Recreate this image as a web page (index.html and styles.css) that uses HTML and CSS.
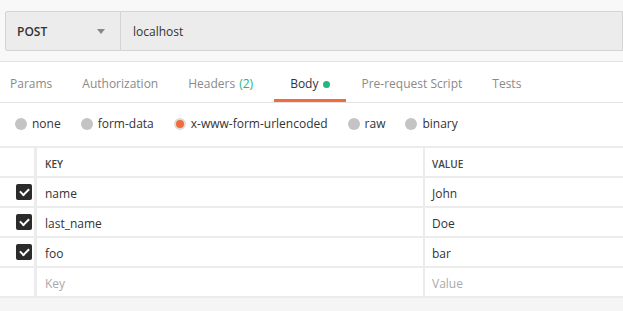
FILE: index.html
```html
<!DOCTYPE html>
<html lang="en">
<head>
    <meta charset="UTF-8">
    <title>Request - Body</title>
    <link rel="stylesheet" href="styles.css">
</head>
<body>
    <div class="request-bar">
        <div class="method">
            <span>POST</span>
            <span class="caret"></span>
        </div>
        <div class="url">localhost</div>
    </div>

    <div class="tabs">
        <div class="tab">Params</div>
        <div class="tab">Authorization</div>
        <div class="tab">Headers <span class="count">(2)</span></div>
        <div class="tab active">Body <span class="dot"></span></div>
        <div class="tab">Pre-request Script</div>
        <div class="tab">Tests</div>
    </div>

    <div class="body-types">
        <label class="radio"><span class="circle"></span>none</label>
        <label class="radio"><span class="circle"></span>form-data</label>
        <label class="radio"><span class="circle selected"></span>x-www-form-urlencoded</label>
        <label class="radio"><span class="circle"></span>raw</label>
        <label class="radio"><span class="circle"></span>binary</label>
    </div>

    <div class="params">
        <div class="row head">
            <div class="cell check"></div>
            <div class="cell key">KEY</div>
            <div class="cell value">VALUE</div>
        </div>
        <div class="row">
            <div class="cell check"><span class="checkbox"></span></div>
            <div class="cell key">name</div>
            <div class="cell value">John</div>
        </div>
        <div class="row">
            <div class="cell check"><span class="checkbox"></span></div>
            <div class="cell key">last_name</div>
            <div class="cell value">Doe</div>
        </div>
        <div class="row">
            <div class="cell check"><span class="checkbox"></span></div>
            <div class="cell key">foo</div>
            <div class="cell value">bar</div>
        </div>
        <div class="row empty">
            <div class="cell check"></div>
            <div class="cell key">Key</div>
            <div class="cell value">Value</div>
        </div>
    </div>
</body>
</html>
```

FILE: styles.css
```css
* {
    margin: 0;
    padding: 0;
    box-sizing: border-box;
}
body {
    font-family: 'Open Sans', 'Noto Sans', sans-serif;
    font-size: 12px;
    color: #333;
    background: #f5f5f5;
    overflow: hidden;
}
.request-bar {
    display: flex;
    padding: 11px 0 10px 5px;
    background: #f8f8f8;
    border-bottom: 1px solid #e3e3e3;
}
.method {
    width: 116px;
    height: 40px;
    display: flex;
    align-items: center;
    justify-content: space-between;
    padding: 0 15px 0 11px;
    background: #ececec;
    border: 1px solid #d4d4d4;
    border-radius: 2px 0 0 2px;
    font-weight: 600;
    color: #333;
}
.caret {
    width: 0;
    height: 0;
    border-left: 4px solid transparent;
    border-right: 4px solid transparent;
    border-top: 5px solid #888;
}
.url {
    flex: 1;
    height: 40px;
    display: flex;
    align-items: center;
    padding-left: 12px;
    background: #ececec;
    border: 1px solid #d4d4d4;
    border-left: none;
    color: #333;
}
.tabs {
    display: flex;
    height: 41px;
    background: #fff;
    border-bottom: 1px solid #e3e3e3;
}
.tab {
    display: flex;
    align-items: center;
    padding: 6px 15px 0;
    color: #8a8a8a;
    white-space: nowrap;
    border-bottom: 3px solid transparent;
}
.tab:first-child {
    padding-left: 10px;
}
.tab .count {
    color: #26b47f;
    margin-left: 4px;
}
.tab.active {
    color: #333;
    border-bottom-color: #f26b3a;
    padding: 6px 16px 0;
    margin-left: 6px;
}
.dot {
    width: 7px;
    height: 7px;
    border-radius: 50%;
    background: #26b47f;
    margin-left: 5px;
    margin-top: 1px;
}
.body-types {
    display: flex;
    align-items: center;
    gap: 20px;
    height: 43px;
    padding: 0 0 2px 15px;
    background: #fff;
}
.radio {
    display: flex;
    align-items: center;
    gap: 5px;
    color: #333;
}
.circle {
    width: 12px;
    height: 12px;
    border-radius: 50%;
    background: #c4c4c4;
}
.circle.selected {
    background: #f26b3a;
    border: 2px solid #dcdcdc;
}
.params {
    background: #fff;
    border-top: 2px solid #ececec;
}
.row {
    display: flex;
    height: 30px;
    border-bottom: 2px solid #ececec;
}
.cell {
    display: flex;
    align-items: center;
    padding: 2px 0 0 8px;
}
.cell.check {
    width: 37px;
    padding: 0 2px 0 0;
    justify-content: flex-end;
    border-right: 3px solid #ececec;
}
.cell.key {
    width: 388px;
    border-right: 2px solid #ececec;
}
.cell.value {
    flex: 1;
    padding-left: 7px;
}
.row.head .cell.key,
.row.head .cell.value {
    font-size: 10px;
    font-weight: 600;
    color: #444;
    padding-top: 3px;
}
.row.empty .cell {
    color: #aaa;
}
.checkbox {
    width: 16px;
    height: 16px;
    border-radius: 2px;
    background: #2b2b2b;
    display: flex;
    align-items: center;
    justify-content: center;
}
.checkbox::after {
    content: "";
    width: 7px;
    height: 4px;
    border-left: 2px solid #fff;
    border-bottom: 2px solid #fff;
    transform: rotate(-45deg);
    margin-top: -2px;
}
```
